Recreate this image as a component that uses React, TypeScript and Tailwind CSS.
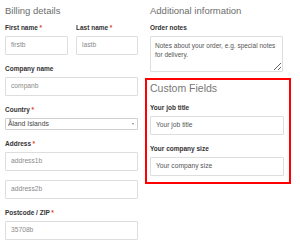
import React from 'react';

const Label = ({ text, required }: { text: string; required?: boolean }) => (
    <div className="text-[6.5px] leading-[10px] font-bold text-[#333] mb-[3px]">
        {text}
        {required && <span className="text-[#e2401c] ml-[1.5px]">*</span>}
    </div>
);

const Field = ({ value, dark }: { value: string; dark?: boolean }) => (
    <div
        className={`h-[19px] w-full border border-[#dedede] rounded-[1px] bg-white flex items-center pl-[5px] text-[6.7px] ${
            dark ? 'text-[#555]' : 'text-[#8a8a8a]'
        }`}
    >
        {value}
    </div>
);

export default function App() {
    return (
        <div
            className="w-[300px] h-[246px] bg-white flex gap-[12px] pl-[5px] overflow-hidden"
            style={{ fontFamily: '"Liberation Sans", Arial, sans-serif' }}
        >
            {/* billing */}
            <div className="w-[133px] flex flex-col shrink-0">
                <h3 className="mt-[3px] mb-[4px] text-[9.5px] leading-[16px] text-[#6d6d6d]">Billing details</h3>

                <div className="flex gap-[8px]">
                    <div className="w-[63px]">
                        <Label text="First name" required />
                        <Field value="firstb" />
                    </div>
                    <div className="w-[62px]">
                        <Label text="Last name" required />
                        <Field value="lastb" />
                    </div>
                </div>

                <div className="mt-[9px]">
                    <Label text="Company name" />
                    <Field value="companb" />
                </div>

                <div className="mt-[9px]">
                    <Label text="Country" required />
                    <div className="h-[12px] w-full border border-[#cfcfcf] rounded-[1px] flex items-center justify-between pl-[2px] pr-[3px] text-[6.8px] text-[#444]">
                        <span>Åland Islands</span>
                        <span className="w-0 h-0 border-l-[1.5px] border-r-[1.5px] border-t-[2px] border-l-transparent border-r-transparent border-t-[#888]" />
                    </div>
                </div>

                <div className="mt-[9px]">
                    <Label text="Address" required />
                    <Field value="address1b" />
                </div>
                <div className="mt-[9px]">
                    <Field value="address2b" />
                </div>

                <div className="mt-[9px]">
                    <Label text="Postcode / ZIP" required />
                    <Field value="35708b" />
                </div>
            </div>

            {/* additional */}
            <div className="w-[133px] flex flex-col shrink-0">
                <h3 className="mt-[3px] mb-[4px] text-[9.5px] leading-[16px] text-[#6d6d6d]">Additional information</h3>
                <Label text="Order notes" />
                <textarea
                    readOnly
                    placeholder="Notes about your order, e.g. special notes for delivery."
                    className="h-[36px] w-full border border-[#dedede] rounded-[1px] px-[4px] pt-[4px] text-[6.5px] leading-[9px] placeholder:text-[#555] outline-none"
                />

                <div className="mt-[6px] -ml-[5px] w-[146px] border-2 border-[#f00] pl-[3px] pr-[5px] pb-[6px]">
                    <h3 className="mb-[7px] text-[10.5px] leading-[16px] text-[#777]">Custom Fields</h3>
                    <Label text="Your job title" />
                    <Field value="Your job title" dark />
                    <div className="mt-[9px]">
                        <Label text="Your company size" />
                        <Field value="Your company size" dark />
                    </div>
                </div>
            </div>
        </div>
    );
}
